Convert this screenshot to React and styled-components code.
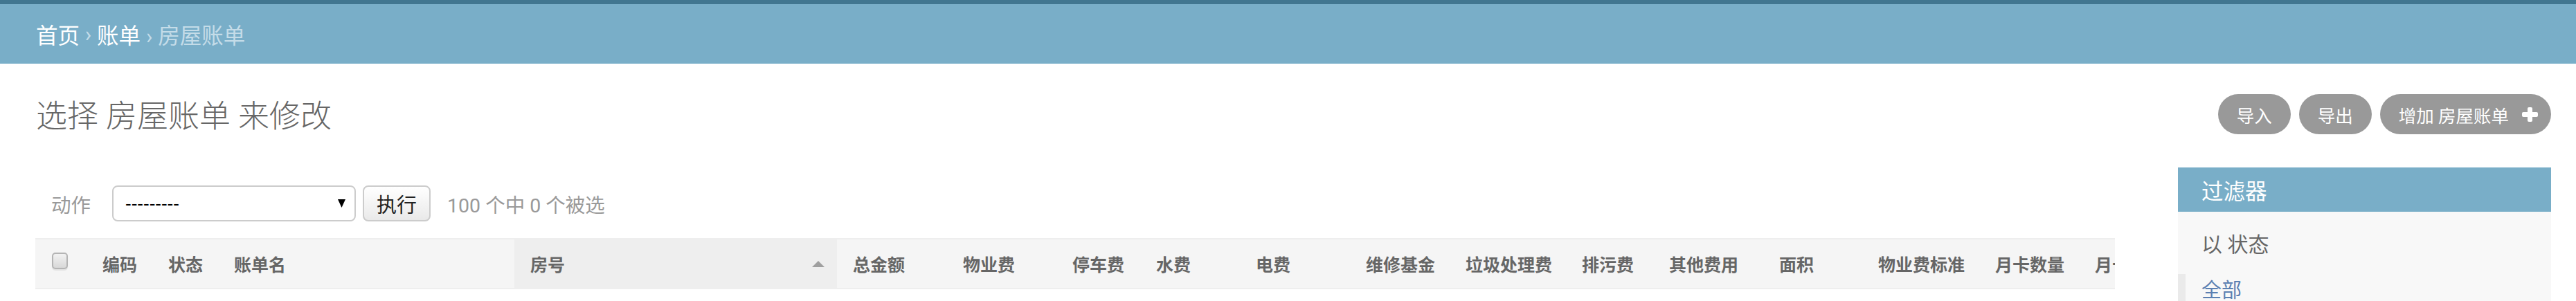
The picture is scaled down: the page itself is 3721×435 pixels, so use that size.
import React from "react";
import styled, { createGlobalStyle } from "styled-components";

const GlobalStyle = createGlobalStyle`
  html, body { margin: 0; padding: 0; background: #fff; }
  body {
    font-family: Roboto, "Noto Sans CJK SC", "DejaVu Sans", sans-serif;
    color: #333;
  }
  * { box-sizing: border-box; }
`;

const Breadcrumbs = styled.div`
  height: 92px;
  border-top: 6px solid #417690;
  background: #79aec8;
  padding-left: 52px;
  display: flex;
  align-items: center;
  font-size: 31.5px;
  color: #c4dce8;
  white-space: pre;
`;

const Crumb = styled.a`
  color: #fff;
  text-decoration: none;
`;

const Content = styled.div`
  padding: 44px 36px 0 51px;
`;

const TitleRow = styled.div`
  display: flex;
  justify-content: space-between;
  align-items: flex-start;
  height: 106px;
`;

const Title = styled.h1`
  margin: 0 0 0 1px;
  padding-top: 4px;
  font-size: 45px;
  line-height: 58px;
  font-weight: 300;
  color: #666;
`;

const ObjectTools = styled.ul`
  list-style: none;
  margin: 0;
  padding: 0;
  display: flex;
  gap: 12px;
`;

const ToolLink = styled.a`
  display: flex;
  align-items: center;
  gap: 19px;
  height: 58px;
  padding: 0 ${(p) => (p.$add ? "19px" : "27px")} 0 27px;
  border-radius: 29px;
  background: #999;
  color: #fff;
  font-size: 25.5px;
  text-decoration: none;
  white-space: pre;
`;

const Main = styled.div`
  display: flex;
  gap: 91px;
  align-items: flex-start;
`;

const Changelist = styled.div`
  flex: 1;
  min-width: 0;
  padding-top: 26px;
`;

const Actions = styled.div`
  display: flex;
  align-items: center;
  height: 52px;
  padding-left: 23px;
  font-size: 28.5px;
  color: #999;
`;

const ActionLabel = styled.label`
  margin-right: 31px;
`;

const Select = styled.div`
  width: 352px;
  height: 52px;
  border: 2px solid #ccc;
  border-radius: 8px;
  background: #fff;
  display: flex;
  align-items: center;
  justify-content: space-between;
  padding: 0 13px 0 17px;
  font-family: "Liberation Sans", Arial, sans-serif;
  font-size: 26px;
  color: #000;
`;

const GoButton = styled.button`
  margin-left: 10px;
  width: 98px;
  height: 52px;
  border: 2px solid #ccc;
  border-radius: 8px;
  background: linear-gradient(#fff, #e9e9e9);
  font-family: inherit;
  font-size: 29px;
  color: #222;
  padding: 0;
`;

const Counter = styled.span`
  margin-left: 24px;
`;

const Results = styled.div`
  margin-top: 24px;
  overflow: hidden;
`;

const HeadRow = styled.div`
  display: flex;
  width: max-content;
  height: 74px;
  border-top: 2px solid #eee;
  border-bottom: 2px solid #eee;
  background: #f5f5f5;
`;

const HeadCell = styled.div`
  flex: none;
  width: ${(p) => p.$w}px;
  display: flex;
  align-items: center;
  padding: 0 18px 0 ${(p) => (p.$check ? "24px" : "23px")};
  background: ${(p) => (p.$sorted ? "#eee" : "transparent")};
  font-size: 25px;
  font-weight: 700;
  color: #666;
  white-space: nowrap;
`;

const Checkbox = styled.span`
  display: block;
  width: 23px;
  height: 24px;
  margin-bottom: 8px;
  border: 2px solid #b4b4b4;
  border-radius: 5px;
  background: linear-gradient(#f2f2f2, #d8d8d8);
  box-shadow: 0 2px 1px rgba(0, 0, 0, 0.08);
`;

const SortArrow = styled.svg`
  margin-left: auto;
  flex: none;
`;

const Filter = styled.div`
  flex: none;
  width: 539px;
  min-height: 230px;
  background: #f8f8f8;
`;

const FilterTitle = styled.h2`
  margin: 0;
  height: 64px;
  display: flex;
  align-items: center;
  padding-left: 34px;
  background: #79aec8;
  color: #fff;
  font-size: 31.5px;
  font-weight: 400;
`;

const FilterGroup = styled.h3`
  margin: 30px 0 24px;
  padding-left: 34px;
  font-size: 30px;
  line-height: 36px;
  font-weight: 400;
  color: #666;
`;

const FilterList = styled.ul`
  list-style: none;
  margin: 0;
  padding: 0;
`;

const FilterItem = styled.li`
  padding: 4px 0 0 23px;
  border-left: 11px solid ${(p) => (p.$selected ? "#eaeaea" : "transparent")};
  font-size: 29px;
  line-height: 40px;
  a {
    color: #5b80b2;
    text-decoration: none;
  }
`;

const columns = [
  { label: "编码", w: 95 },
  { label: "状态", w: 95 },
  { label: "账单名", w: 428 },
  { label: "房号", w: 466, sorted: true },
  { label: "总金额", w: 159 },
  { label: "物业费", w: 158 },
  { label: "停车费", w: 121 },
  { label: "水费", w: 144 },
  { label: "电费", w: 159 },
  { label: "维修基金", w: 144 },
  { label: "垃圾处理费", w: 168 },
  { label: "排污费", w: 126 },
  { label: "其他费用", w: 159 },
  { label: "面积", w: 143 },
  { label: "物业费标准", w: 169 },
  { label: "月卡数量", w: 144 },
  { label: "月卡金额", w: 160 },
];

function PlusIcon() {
  return (
    <svg width="23" height="21" viewBox="0 0 23 21">
      <rect x="8" y="0" width="7" height="21" rx="2" fill="#fff" />
      <rect x="0" y="7" width="23" height="7" rx="2" fill="#fff" />
    </svg>
  );
}

export default function App() {
  return (
    <>
      <GlobalStyle />
      <Breadcrumbs>
        <Crumb href="#">首页</Crumb>
        {" › "}
        <Crumb href="#">账单</Crumb>
        {" › 房屋账单"}
      </Breadcrumbs>

      <Content>
        <TitleRow>
          <Title>选择 房屋账单 来修改</Title>
          <ObjectTools>
            <li><ToolLink href="#">导入</ToolLink></li>
            <li><ToolLink href="#">导出</ToolLink></li>
            <li>
              <ToolLink href="#" $add>
                增加 房屋账单
                <PlusIcon />
              </ToolLink>
            </li>
          </ObjectTools>
        </TitleRow>

        <Main>
          <Changelist>
            <Actions>
              <ActionLabel>动作</ActionLabel>
              <Select>
                <span>---------</span>
                <svg width="11" height="12" viewBox="0 0 11 12">
                  <polygon points="0,0 11,0 5.5,12" fill="#000" />
                </svg>
              </Select>
              <GoButton type="button">执行</GoButton>
              <Counter>100 个中 0 个被选</Counter>
            </Actions>

            <Results>
              <HeadRow>
                <HeadCell $w={74} $check>
                  <Checkbox />
                </HeadCell>
                {columns.map((c) => (
                  <HeadCell key={c.label} $w={c.w} $sorted={c.sorted}>
                    {c.label}
                    {c.sorted && (
                      <SortArrow width="18" height="9" viewBox="0 0 18 9">
                        <polygon points="9,0 18,9 0,9" fill="#9f9f9f" />
                      </SortArrow>
                    )}
                  </HeadCell>
                ))}
              </HeadRow>
            </Results>
          </Changelist>

          <Filter>
            <FilterTitle>过滤器</FilterTitle>
            <FilterGroup>以 状态</FilterGroup>
            <FilterList>
              <FilterItem $selected><a href="#">全部</a></FilterItem>
            </FilterList>
          </Filter>
        </Main>
      </Content>
    </>
  );
}
